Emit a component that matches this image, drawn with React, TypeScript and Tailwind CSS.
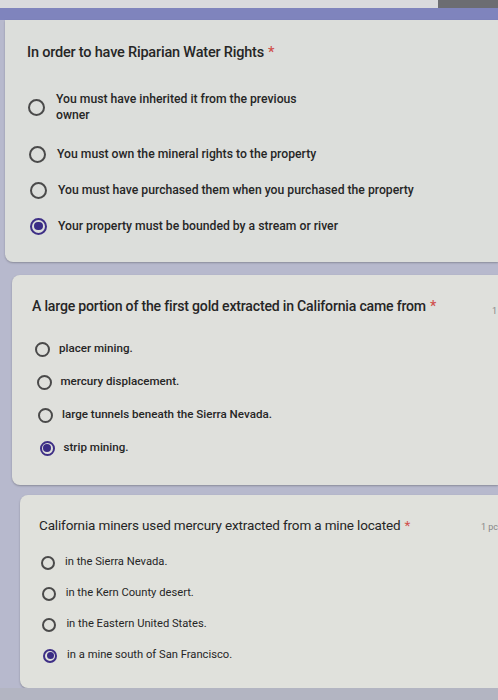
import React from 'react'

type Opt = { label: React.ReactNode; checked?: boolean }

function Radio({ checked, size }: { checked?: boolean; size: number }) {
  return (
    <span
      className={
        checked
          ? 'flex shrink-0 items-center justify-center rounded-full border-2 border-[#3e2f86]'
          : 'flex shrink-0 items-center justify-center rounded-full border-2 border-[#4a4a4a]'
      }
      style={{ width: size, height: size }}
    >
      {checked && <span className="rounded-full bg-[#3a2c85]" style={{ width: size / 2, height: size / 2 }} />}
    </span>
  )
}

function Asterisk() {
  return <span className="ml-1 text-[#d0504c]">*</span>
}

export default function App() {
  const q1: Opt[] = [
    {
      label: (
        <span className="block w-[250px] leading-[16px]">
          You must have inherited it from the previous owner
        </span>
      ),
    },
    { label: 'You must own the mineral rights to the property' },
    { label: 'You must have purchased them when you purchased the property' },
    { label: 'Your property must be bounded by a stream or river', checked: true },
  ]
  const q2: Opt[] = [
    { label: 'placer mining.' },
    { label: 'mercury displacement.' },
    { label: 'large tunnels beneath the Sierra Nevada.' },
    { label: 'strip mining.', checked: true },
  ]
  const q3: Opt[] = [
    { label: 'in the Sierra Nevada.' },
    { label: 'in the Kern County desert.' },
    { label: 'in the Eastern United States.' },
    { label: 'in a mine south of San Francisco.', checked: true },
  ]

  return (
    <div
      className="flex h-[700px] w-[498px] flex-col overflow-hidden bg-[#b7b9cd] text-[#262626]"
      style={{ fontFamily: 'Roboto, "Liberation Sans", sans-serif' }}
    >
      {/* bottom of the previous card */}
      <div className="flex h-[8px] shrink-0">
        <div className="flex-1 bg-[#d9dadd]" />
        <div className="w-[60px] bg-[#6c6d72]" />
      </div>
      <div className="h-[12px] shrink-0 bg-[#7f84bd]" />

      {/* card 1 */}
      <div className="ml-[5px] h-[242px] shrink-0 rounded-bl-[8px] bg-[#dcdedb] pl-[22px] pt-[23px] shadow-[0_1px_2px_rgba(0,0,0,0.25)]">
        <div className="text-[14.5px] font-medium leading-[20px] tracking-[-0.2px]">
          In order to have Riparian Water Rights
          <Asterisk />
        </div>
        <div className="mt-[26px] flex flex-col">
          {q1.map((o, i) => (
            <div
              key={i}
              className={
                i === 0
                  ? 'flex h-[36px] items-center gap-[11px] pl-[1px]'
                  : i === 1
                    ? 'mt-[17px] flex h-[24px] items-center gap-[11px] pl-[2px] text-[12.2px] font-medium'
                    : 'mt-[12px] flex h-[24px] items-center gap-[11px] pl-[3px] text-[12.2px] font-medium'
              }
            >
              <Radio checked={o.checked} size={17} />
              <span className={i === 0 ? 'text-[12.2px] font-medium' : ''}>{o.label}</span>
            </div>
          ))}
        </div>
      </div>

      <div className="h-[13px] shrink-0" />

      {/* card 2 */}
      <div className="ml-[12px] flex h-[210px] shrink-0 rounded-l-[8px] bg-[#dfe0dc] pl-[20px] pt-[21px] shadow-[0_1px_2px_rgba(0,0,0,0.25)]">
        <div className="flex-1">
          <div className="text-[14.1px] font-medium leading-[20px] tracking-[-0.2px]">
            A large portion of the first gold extracted in California came from
            <Asterisk />
          </div>
          <div className="mt-[22px] flex flex-col gap-[11px]">
            {q2.map((o, i) => (
              <div
                key={i}
                className="flex h-[22px] items-center gap-[9px] text-[11.6px] font-medium"
                style={{ paddingLeft: 3 + i * 1.5 }}
              >
                <Radio checked={o.checked} size={15} />
                <span>{o.label}</span>
              </div>
            ))}
          </div>
        </div>
        <div className="w-[6px] pt-[10px] text-[9px] leading-[10px] text-[#888]">1</div>
      </div>

      <div className="h-[10px] shrink-0" />

      {/* card 3 */}
      <div className="ml-[20px] flex h-[193px] shrink-0 rounded-l-[8px] bg-[#e0e1dc] pl-[19px] pt-[20px] shadow-[0_1px_2px_rgba(0,0,0,0.25)]">
        <div className="flex-1">
          <div className="text-[13.5px] leading-[20px] tracking-[-0.15px]">
            California miners used mercury extracted from a mine located
            <Asterisk />
          </div>
          <div className="mt-[17px] flex flex-col gap-[10px]">
            {q3.map((o, i) => (
              <div
                key={i}
                className="flex h-[21px] items-center gap-[10px] text-[11.2px]"
                style={{ paddingLeft: 2 + i * 0.7 }}
              >
                <Radio checked={o.checked} size={14} />
                <span>{o.label}</span>
              </div>
            ))}
          </div>
        </div>
        <div className="w-[17px] whitespace-nowrap pt-[6px] text-[9px] text-[#888]">1 pc</div>
      </div>

      <div className="flex-1 bg-[#b3b5c2]" />
    </div>
  )
}
